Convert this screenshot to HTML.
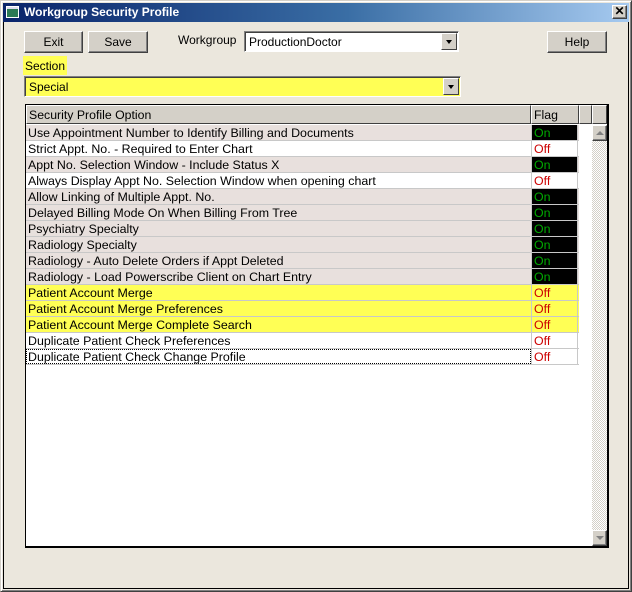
<!DOCTYPE html>
<html><head><style>
*{margin:0;padding:0;box-sizing:border-box}
body{width:632px;height:592px;background:#ebe7dd;font-family:"Liberation Sans",Arial,sans-serif;font-size:12px;position:relative;overflow:hidden;color:#000}
.a{position:absolute}
.win{left:0;top:0;width:632px;height:592px;border:1px solid #d4d0c8;border-right-color:#404040;border-bottom-color:#404040;box-shadow:inset 1px 1px 0 #fff,inset -1px -1px 0 #808080}
.inner{left:3px;top:22px;width:626px;height:567px;border:1px solid #000;border-top:none}
.title{left:3px;top:3px;width:626px;height:19px;background:linear-gradient(90deg,#0a246a,#3a6ea5 55%,#a6caf0);color:#fff;font-weight:bold;font-size:12px;line-height:18px;padding-left:21px}
.btn{background:#d4d0c8;border:1px solid;border-color:#fff #404040 #404040 #fff;box-shadow:inset -1px -1px 0 #808080;text-align:center;line-height:19px;font-size:12px}
.combo{background:#fff;border:1px solid;border-color:#808080 #fff #fff #808080;box-shadow:inset 1px 1px 0 #404040;padding-left:4px;line-height:20px}
.arr{position:absolute;right:1px;top:1px;width:16px;height:17px;background:#d4d0c8;border:1px solid;border-color:#fff #404040 #404040 #fff}
.arr:after{content:"";position:absolute;left:4px;top:6px;border-left:3px solid transparent;border-right:3px solid transparent;border-top:4px solid #000}
.grid{left:25px;top:104px;width:584px;height:444px;border:1px solid #000;background:#fff;border-width:1px 2px 2px 1px}
.hd{top:0;height:19px;background:#d4d0c8;border:1px solid;border-color:#fff #404040 #404040 #fff;line-height:19px;padding-left:2px;font-size:12.3px}
.row{left:0;width:553px;height:16px;border-bottom:1px solid #c8c8c8;line-height:17px;font-size:12.4px}
.row .t{position:absolute;left:2px;top:0;width:502px;height:15px;}
.row .f{position:absolute;left:505px;top:0;width:47px;height:15px;border-left:1px solid #c8c8c8;padding-left:2px;border-right:1px solid #c8c8c8}
.on{background:#000;color:#0a0}
.off{color:#c00}
.g{background:#e8e0dd}.y{background:#ffff55}.w{background:#fff}
</style></head><body>
<div class="a win"></div>
<div class="a title">Workgroup Security Profile</div>
<div class="a" style="left:6px;top:6px;width:13px;height:12px;background:#2b7a55;border:1px solid #fff;box-shadow:inset 0 2px 0 #dde"></div>
<div class="a btn" style="left:612px;top:5px;width:15px;height:14px;line-height:11px;font-size:12px;font-weight:bold">✕</div>
<div class="a inner"></div>

<div class="a btn" style="left:24px;top:31px;width:59px;height:22px;line-height:21px">Exit</div>
<div class="a btn" style="left:88px;top:31px;width:60px;height:22px;line-height:21px">Save</div>
<div class="a" style="left:178px;top:33px;font-size:12px">Workgroup</div>
<div class="a combo" style="left:244px;top:31px;width:215px;height:21px">ProductionDoctor<div class="arr"></div></div>
<div class="a btn" style="left:547px;top:31px;width:60px;height:22px;line-height:21px">Help</div>

<div class="a" style="left:23px;top:56px;width:44px;height:19px;background:#ffff55;padding-left:2px;line-height:21px">Section</div>
<div class="a combo" style="left:24px;top:76px;width:437px;height:21px;background:#ffff55">Special<div class="arr"></div></div>

<div class="a grid">
<div class="a hd" style="left:0;width:505px">Security Profile Option</div>
<div class="a hd" style="left:505px;width:48px">Flag</div>
<div class="a hd" style="left:553px;width:13px"></div>
<div class="a hd" style="left:566px;width:15px"></div>
<div class="a" style="left:566px;top:20px;width:15px;height:421px;background:repeating-conic-gradient(#d4d0c8 0 25%,#fff 0 50%) 0 0/2px 2px"></div>
<div class="a btn" style="left:566px;top:20px;width:15px;height:16px"><div style="position:absolute;left:3px;top:5px;border-left:4px solid transparent;border-right:4px solid transparent;border-bottom:4px solid #808080"></div></div>
<div class="a btn" style="left:566px;top:425px;width:15px;height:16px"><div style="position:absolute;left:3px;top:5px;border-left:4px solid transparent;border-right:4px solid transparent;border-top:4px solid #808080"></div></div>

<div class="a row g" style="top:20px"><div class="t">Use Appointment Number to Identify Billing and Documents</div><div class="f on">On</div></div>
<div class="a row w" style="top:36px"><div class="t">Strict Appt. No. - Required to Enter Chart</div><div class="f off">Off</div></div>
<div class="a row g" style="top:52px"><div class="t">Appt No. Selection Window - Include Status X</div><div class="f on">On</div></div>
<div class="a row w" style="top:68px"><div class="t">Always Display Appt No. Selection Window when opening chart</div><div class="f off">Off</div></div>
<div class="a row g" style="top:84px"><div class="t">Allow Linking of Multiple Appt. No.</div><div class="f on">On</div></div>
<div class="a row g" style="top:100px"><div class="t">Delayed Billing Mode On When Billing From Tree</div><div class="f on">On</div></div>
<div class="a row g" style="top:116px"><div class="t">Psychiatry Specialty</div><div class="f on">On</div></div>
<div class="a row g" style="top:132px"><div class="t">Radiology Specialty</div><div class="f on">On</div></div>
<div class="a row g" style="top:148px"><div class="t">Radiology - Auto Delete Orders if Appt Deleted</div><div class="f on">On</div></div>
<div class="a row g" style="top:164px"><div class="t">Radiology - Load Powerscribe Client on Chart Entry</div><div class="f on">On</div></div>
<div class="a row y" style="top:180px"><div class="t">Patient Account Merge</div><div class="f off">Off</div></div>
<div class="a row y" style="top:196px"><div class="t">Patient Account Merge Preferences</div><div class="f off">Off</div></div>
<div class="a row y" style="top:212px"><div class="t">Patient Account Merge Complete Search</div><div class="f off">Off</div></div>
<div class="a row w" style="top:228px"><div class="t">Duplicate Patient Check Preferences</div><div class="f off">Off</div></div>
<div class="a row w" style="top:244px"><div class="t" style="outline:1px dotted #000;outline-offset:-1px;left:0;padding-left:2px;width:505px">Duplicate Patient Check Change Profile</div><div class="f off">Off</div></div>
</div>
</body></html>
